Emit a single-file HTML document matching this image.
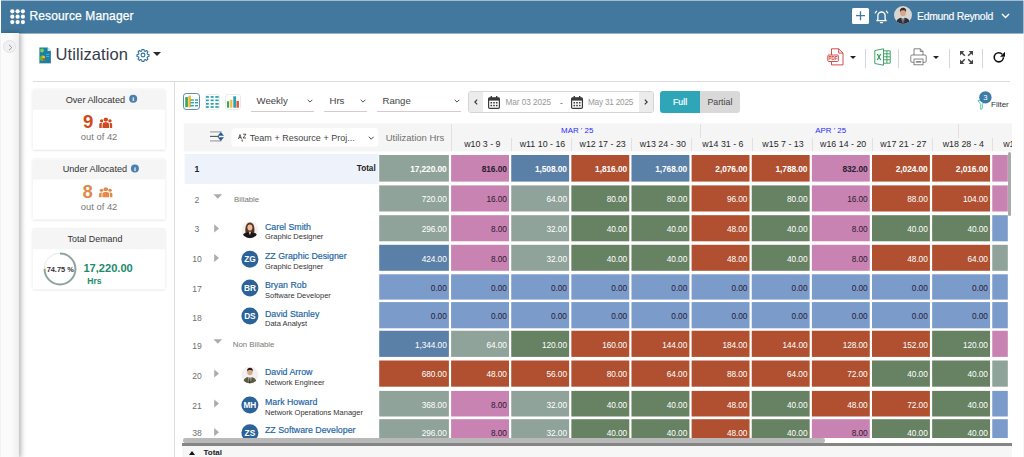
<!DOCTYPE html>
<html><head><meta charset="utf-8"><title>Resource Manager - Utilization</title>
<style>
*{box-sizing:border-box;margin:0;padding:0}
html,body{width:1024px;height:457px;overflow:hidden;background:#fff}
body{position:relative;font-family:"Liberation Sans",sans-serif;color:#333}
.abs,.c,.wk,.vs,.rn,.ar,.av,.nm,.sb,.cd,.gp,.tot{position:absolute}
#top{left:1px;top:0;width:1023px;height:33px;background:#42789d;border-top:1px solid #a3bdcf}
#top .title{position:absolute;left:28.5px;top:8.3px;font-size:12px;line-height:14px;color:#fff;letter-spacing:.13px;-webkit-text-stroke:.25px #fff}
#side{left:1px;top:33px;width:18px;height:425px;background:linear-gradient(to right,#fbfbfb 55%,#efefef);box-shadow:2px 0 5px rgba(0,0,0,.3)}
#side .btn{position:absolute;left:2.2px;top:7.4px;width:13px;height:13px;border-radius:50%;background:#f1f1f1;border:.6px solid #e2e2e2}
.hl{left:33px;top:81px;width:976.600px;height:1px;background:#dcdcdc}
.vl{left:174px;top:81px;width:1px;height:376px;background:#dcdcdc}
h1{position:absolute;left:55.5px;top:44px;font-size:16.5px;line-height:20px;font-weight:400;color:#343c4a;letter-spacing:.1px}
.ct{position:absolute;font-size:9.15px;line-height:12px;color:#333;white-space:nowrap}
.big{position:absolute;font-weight:700;font-size:18.6px;line-height:22px}
.out{position:absolute;left:80.6px;width:37px;text-align:center;font-size:9.4px;color:#777;line-height:13px;white-space:nowrap}
.sel{position:absolute;top:91px;height:20.5px;border-bottom:1px solid #d9c9cc;font-size:9.6px;line-height:20px;color:#444;padding-left:6px}
.sel svg{position:absolute;right:.8px;top:8.2px}
.tb{position:absolute}
.tsep{position:absolute;top:48.500px;width:1px;height:19px;background:#d4d4da}
#ghead{left:183.5px;top:123.5px;width:828.5px;height:28.2px;background:#f4f4f4}
.wk{top:138px;width:60.13px;text-align:center;font-size:8.85px;line-height:12px;color:#2a2a2a;white-space:nowrap;overflow:hidden}
.vs{width:1px;background:#e6dfdf}
.mo{position:absolute;top:125px;font-size:7.9px;line-height:11px;color:#2a2aff;text-align:center;letter-spacing:0;padding-left:3.4px}
.c{color:#fff;font-size:8.3px;letter-spacing:-.08px;text-align:right;padding-right:2.2px;white-space:nowrap}
.c.b{font-weight:700;font-size:8.4px}
.c.d{color:#2a2030}
.rn{left:187px;width:20px;text-align:center;font-size:8.6px;line-height:12px;color:#707070}
.rn.b{font-weight:700}
.ar{left:214.4px;width:0;height:0;border-left:4.6px solid #b0b0b0;border-top:3.7px solid transparent;border-bottom:3.7px solid transparent;margin-top:-.3px}
.cd{left:213.8px;width:0;height:0;border-top:4px solid #b3b3b3;border-left:4px solid transparent;border-right:4px solid transparent}
.av{left:241.4px;width:17px;height:17px;border-radius:50%}
.av.in{background:#2b6399;color:#fff;font-weight:700;font-size:8.3px;line-height:17px;text-align:center;letter-spacing:-.1px}
.nm{left:265px;font-size:8.8px;line-height:12px;color:#2265a4;-webkit-text-stroke:.18px #2265a4;white-space:nowrap}
.sb{left:265px;font-size:7.5px;line-height:10px;color:#333;white-space:nowrap}
.gp{font-size:7.8px;line-height:11px;color:#777}
.tot{left:330px;width:45.700px;top:163px;text-align:right;font-weight:700;font-size:8.2px;line-height:12px;color:#222}
</style></head><body>

<!-- top bar -->
<div id="top" class="abs">
 <svg style="position:absolute;left:9px;top:7.600px" width="16" height="16" viewBox="0 0 16 16" fill="#fff"><circle cx="2.300" cy="2.300" r="2.100"/><circle cx="7.600" cy="2.300" r="2.100"/><circle cx="12.900" cy="2.300" r="2.100"/><circle cx="2.300" cy="7.700" r="2.100"/><circle cx="7.600" cy="7.700" r="2.100"/><circle cx="12.900" cy="7.700" r="2.100"/><circle cx="2.300" cy="13.100" r="2.100"/><circle cx="7.600" cy="13.100" r="2.100"/><circle cx="12.900" cy="13.100" r="2.100"/></svg>
 <div class="title">Resource Manager</div>
 <div style="position:absolute;left:851.300px;top:7px;width:17px;height:15.500px;background:#fff;border-radius:1.500px"></div>
 <svg style="position:absolute;left:851.300px;top:7px" width="17" height="15.500" viewBox="0 0 17 15.500"><path d="M8.500 3.200v9M4 7.700h9" stroke="#42789d" stroke-width="1.300" fill="none"/></svg>
 <svg style="position:absolute;left:872.500px;top:6.500px" width="15" height="17" viewBox="0 0 15 17" fill="none" stroke="#fff" stroke-width="1.300" stroke-linecap="round"><path d="M3.900 11.500V7.600a3.600 3.600 0 017.200 0v3.900l1.100 1.100H2.800z" stroke-linejoin="round"/><path d="M6.500 14.600h2"/><path d="M2.600 3.200L1.300 4.900M12.400 3.200l1.300 1.700"/></svg>
 <svg style="position:absolute;left:892.700px;top:5.200px" width="18" height="18" viewBox="0 0 17 17"><defs><clipPath id="ce"><circle cx="8.500" cy="8.500" r="8.500"/></clipPath></defs><g clip-path="url(#ce)"><rect width="17" height="17" fill="#d9d6d2"/><ellipse cx="8.500" cy="6.200" rx="2.800" ry="3.400" fill="#d8a68a"/><path d="M5.600 5.600C5.300 2.700 7 1.700 8.600 1.700s3.300 1 2.800 3.900c-.6-1.200-1.500-1.600-2.800-1.600s-2.300.4-3 1.600z" fill="#3a2a22"/><path d="M1.800 17c0-4.300 2.600-6 6.700-6s6.700 1.700 6.700 6z" fill="#2b2f3a"/><path d="M7.200 10.700h2.600l-.5 6.300H7.700z" fill="#f4f4f4"/><path d="M8.100 11.500h.8l.4 5.500H7.700z" fill="#1c1c22"/></g></svg>
 <div style="position:absolute;left:916px;top:9px;font-size:10.400px;line-height:14px;color:#fff;white-space:nowrap;letter-spacing:-.27px;-webkit-text-stroke:.15px #fff">Edmund Reynold</div>
 <svg style="position:absolute;left:1000px;top:12px" width="9" height="6" viewBox="0 0 9 6" fill="none" stroke="#fff" stroke-width="1.400"><path d="M1 1l3.500 3.500L8 1"/></svg>
</div>

<div class="abs" style="left:1px;top:33px;width:1023px;height:1px;background:#42789d;opacity:.55"></div>
<div class="abs" style="left:1023px;top:0;width:1px;height:34px;background:#fff;opacity:.5;z-index:5"></div><div class="abs" style="left:1023px;top:34px;width:1px;height:423px;background:#f5f5f5"></div>
<!-- sidebar -->
<div id="side" class="abs"><div class="btn"></div>
 <svg style="position:absolute;left:6.700px;top:10.600px" width="5" height="7" viewBox="0 0 5 7" fill="none" stroke="#8f9bb0" stroke-width="1"><path d="M1 .8l2.800 2.700L1 6.200"/></svg>
</div>

<!-- title row -->
<svg class="abs" style="left:38.300px;top:47px" width="14.200" height="17" viewBox="0 0 14 17"><path d="M1.300.6h8.200l3.300 3.300v12.300H1.300z" fill="#1b7fa6"/><path d="M9.500.6v3.300h3.300z" fill="#d9e4ea"/><circle cx="3.900" cy="3.500" r="1.900" fill="#7fd04c"/><circle cx="4.300" cy="11.300" r="2.700" fill="#59b53c"/><path d="M4.300 11.300V8.600a2.700 2.700 0 012.700 2.700z" fill="#f2c53a"/><path d="M4.300 11.300H7a2.700 2.700 0 01-1.400 2.400z" fill="#d9432f"/><rect x="8" y="7" width="3" height=".8" fill="#5fb7d6"/><rect x="8" y="9" width="3" height=".8" fill="#5fb7d6"/><rect x="1" y="16" width="12" height=".8" fill="#c9c9c9"/></svg>
<h1>Utilization</h1>
<svg class="abs" style="left:135.800px;top:47.700px" width="14" height="14" viewBox="0 0 24 24" fill="none" stroke="#2f6fa3" stroke-width="1.900" stroke-linejoin="round"><circle cx="12" cy="12" r="3.300"/><path d="M10.300 2.500h3.400l.5 2.600 1.700.7 2.200-1.500 2.400 2.400-1.500 2.200.7 1.700 2.600.5v3.400l-2.600.5-.7 1.700 1.500 2.200-2.400 2.400-2.200-1.500-1.700.7-.5 2.600h-3.400l-.5-2.600-1.700-.7-2.200 1.500-2.400-2.400 1.500-2.200-.7-1.700-2.600-.5v-3.400l2.600-.5.7-1.700-1.500-2.200 2.400-2.400 2.200 1.500 1.700-.7z"/></svg>
<div class="abs" style="left:153.400px;top:52.300px;width:0;height:0;border-top:4.200px solid #2b2b2b;border-left:4.100px solid transparent;border-right:4.100px solid transparent"></div>

<!-- top-right toolbar -->
<svg class="tb" style="left:827px;top:47.500px" width="17" height="18" viewBox="0 0 17 18" fill="none" stroke="#cf3a36" stroke-width=".9"><path d="M4.500.8h7.200l4.300 4.300v11.800H4.500v-3.400M4.500 7V.8M11.700.8v4.300H16"/><rect x=".8" y="7" width="10.500" height="6.500" rx=".8" fill="#fff"/><text x="6" y="12" font-family="Liberation Sans,sans-serif" font-size="4.600" font-weight="700" fill="#cf3a36" stroke="none" text-anchor="middle">PDF</text></svg>
<div class="abs" style="left:850px;top:56.400px;width:0;height:0;border-top:3.600px solid #222;border-left:3.600px solid transparent;border-right:3.600px solid transparent"></div>
<div class="tsep" style="left:865px"></div>
<svg class="tb" style="left:873.800px;top:47.500px" width="17" height="18" viewBox="0 0 17 18" fill="none" stroke="#2f9a57" stroke-width=".9"><path d="M9.500 2.800h6.700v12.400H9.500"/><path d="M9.500 5.800h6.700M9.500 8.800h6.700M9.500 11.800h6.700M12.900 2.800v12.400"/><path d="M.8 2.500L9.500.8v16.400L.8 15.500z" fill="#fff"/><path d="M3.300 6l3.400 6M6.700 6l-3.400 6" stroke-width="1.200"/></svg>
<div class="tsep" style="left:898px"></div>
<svg class="tb" style="left:909.500px;top:47.500px" width="17" height="18" viewBox="0 0 17 18" fill="none" stroke="#666" stroke-width=".8"><path d="M4 7V.8h6.300l2.700 2.700V7"/><path d="M10.300.8v2.700H13"/><rect x=".8" y="7" width="15.400" height="7.300" rx="1.200"/><rect x="4" y="11" width="9" height="5.800" fill="#fff"/><path d="M5.800 13.900h5.400" stroke-width="1.300"/></svg>
<div class="abs" style="left:932.600px;top:56.400px;width:0;height:0;border-top:3.600px solid #222;border-left:3.600px solid transparent;border-right:3.600px solid transparent"></div>
<div class="tsep" style="left:949px"></div>
<svg class="tb" style="left:960px;top:50.600px" width="13" height="13" viewBox="0 0 13 13" fill="#444" stroke="#444"><path d="M0 0h4.400L0 4.400zM13 0H8.600L13 4.400zM0 13h4.400L0 8.600zM13 13H8.600L13 8.600z" stroke="none"/><path d="M1.500 1.500l3.300 3.300M11.500 1.500L8.200 4.800M1.500 11.500l3.300-3.300M11.500 11.500L8.200 8.200" stroke-width="1.500" fill="none"/></svg>
<div class="tsep" style="left:982px"></div>
<svg class="tb" style="left:992.600px;top:51px" width="13" height="13" viewBox="0 0 13 13" fill="none" stroke="#111" stroke-width="1.600"><path d="M10.400 6.300A4.600 4.600 0 115.800 1.700c1.300 0 2.500.5 3.300 1.400"/><path d="M12 .7v5H7z" fill="#111" stroke="none"/></svg>

<div class="hl abs"></div><div class="vl abs"></div>

<!-- cards -->
<svg class="abs" style="left:0;top:0" width="200" height="320" viewBox="0 0 200 320">
<defs><filter id="cs" x="-10%" y="-10%" width="120%" height="130%"><feDropShadow dx="0" dy=".4" stdDeviation="1.300" flood-color="#000" flood-opacity=".2"/></filter></defs>
<g filter="url(#cs)"><rect x="32.900" y="89.600" width="132.200" height="59.900" fill="#fff"/><rect x="32.900" y="159.400" width="132.200" height="59.900" fill="#fff"/><rect x="32.900" y="229.100" width="132.200" height="60" fill="#fff"/></g>
<rect x="32.900" y="89.600" width="132.200" height="20.100" fill="#f5f5f5"/><rect x="32.900" y="159.400" width="132.200" height="20.100" fill="#f5f5f5"/><rect x="32.900" y="229.100" width="132.200" height="20.100" fill="#f5f5f5"/>
<circle cx="133.200" cy="98.800" r="4" fill="#4a7fae"/><circle cx="134.900" cy="168.500" r="4" fill="#4a7fae"/>
<text x="133.200" y="101" font-family="Liberation Serif,serif" font-size="6.500" font-weight="700" fill="#fff" text-anchor="middle">i</text><text x="134.900" y="171" font-family="Liberation Serif,serif" font-size="6.500" font-weight="700" fill="#fff" text-anchor="middle">i</text>
<svg x="99" y="117.300" width="13.600" height="10.600" viewBox="0 0 14 12" preserveAspectRatio="none" fill="#cf4a1e"><circle cx="7" cy="2.600" r="2.300"/><circle cx="2.700" cy="3.800" r="1.700"/><circle cx="11.300" cy="3.800" r="1.700"/><path d="M3.600 12V8.300A2.600 2.600 0 016.200 5.700h1.600a2.600 2.600 0 012.600 2.600V12z"/><path d="M.3 12V8.200c0-1.200.9-2 2-2h1.200c-.5.600-.7 1.300-.7 2.100V12zM13.700 12V8.200c0-1.200-.9-2-2-2h-1.200c.5.600.7 1.300.7 2.100V12z"/></svg>
<svg x="98.800" y="186.900" width="14" height="10.700" viewBox="0 0 14 12" preserveAspectRatio="none" fill="#e08a4c"><circle cx="7" cy="2.600" r="2.300"/><circle cx="2.700" cy="3.800" r="1.700"/><circle cx="11.300" cy="3.800" r="1.700"/><path d="M3.600 12V8.300A2.600 2.600 0 016.200 5.700h1.600a2.600 2.600 0 012.600 2.600V12z"/><path d="M.3 12V8.200c0-1.200.9-2 2-2h1.200c-.5.600-.7 1.300-.7 2.100V12zM13.700 12V8.200c0-1.200-.9-2-2-2h-1.200c.5.600.7 1.300.7 2.100V12z"/></svg>
<circle cx="60" cy="269" r="15.900" fill="none" stroke="#e2e2e2" stroke-width=".9"/><circle cx="60" cy="269" r="15.400" fill="none" stroke="#8fa59b" stroke-width="2" stroke-dasharray="72.300 97" transform="rotate(-90 60 269)"/>
<text x="60.200" y="272" font-family="Liberation Sans,sans-serif" font-size="7.400" font-weight="700" fill="#333" text-anchor="middle">74.75 %</text>
</svg>
<div class="ct" style="left:65.700px;top:94px">Over Allocated</div>
<div class="ct" style="left:62.700px;top:163px">Under Allocated</div>
<div class="ct" style="left:67.600px;top:233px;font-size:8.900px">Total Demand</div>
<div class="big" style="left:83px;top:111px;color:#cf4a1e">9</div>
<div class="big" style="left:82.600px;top:181px;color:#e08a4c">8</div>
<div class="out" style="top:130px">out of 42</div>
<div class="out" style="top:200px">out of 42</div>
<div class="abs" style="left:83.400px;top:261px;font-size:11.100px;line-height:14px;font-weight:700;color:#1c8a6c;white-space:nowrap">17,220.00</div>
<div class="abs" style="left:87.300px;top:275px;font-size:8.600px;line-height:12px;font-weight:700;color:#1c8a6c">Hrs</div>

<!-- view toolbar -->
<div class="abs" style="left:182.900px;top:93px;width:17.100px;height:16.800px;border:1.100px solid #5c8ab2;border-radius:3.200px;background:#fff"></div>
<svg class="abs" style="left:185px;top:95px" width="14" height="13" viewBox="0 0 14 13"><rect x=".2" y="2.100" width="2.700" height="10.100" fill="#3fa75a"/><rect x="3.300" y=".6" width="2.700" height="11.800" rx=".8" fill="#f0bb3a"/><g fill="#27a0b2"><rect x="5.600" y="4.300" width="3.300" height="1.400"/><rect x="10" y="4.300" width="3" height="1.400"/><rect x="5.600" y="7" width="3.300" height="1.400"/><rect x="10" y="7" width="3" height="1.400"/><rect x="5.600" y="10" width="3.300" height="1.400"/><rect x="10" y="10" width="3" height="1.400"/></g></svg>
<div class="abs" style="left:204.700px;top:94px;width:15.400px;height:15.600px;border:1px solid #ebebeb;border-radius:3px;background:#fff"></div>
<svg class="abs" style="left:206.200px;top:96px" width="13" height="12" viewBox="0 0 13 12" fill="#27a0b2"><g id="gr"><rect x="0" y=".1" width="2.900" height="1.700"/><rect x="4.600" y=".1" width="3.100" height="1.700"/><rect x="9.300" y=".1" width="3.400" height="1.700"/></g><use href="#gr" y="3.400"/><use href="#gr" y="6.900"/><use href="#gr" y="10.100"/></svg>
<div class="abs" style="left:225.200px;top:94px;width:15.500px;height:15.600px;border:1px solid #ebebeb;border-radius:3px;background:#fff"></div>
<svg class="abs" style="left:226.900px;top:96px" width="12" height="12" viewBox="0 0 12 12"><rect x="0" y="5.200" width="2.200" height="6.500" fill="#3fa75a"/><rect x="3.200" y="3.700" width="2.200" height="8" fill="#f0bb3a"/><rect x="6.300" y=".3" width="2.800" height="11.400" fill="#27a0b2"/><rect x="9.500" y="5" width="2.400" height="6.700" fill="#e0523c"/></svg>

<div class="sel" style="left:250.500px;width:63.500px">Weekly<svg width="6" height="4.500" viewBox="0 0 7 5" fill="none" stroke="#333" stroke-width="1"><path d="M.8.800l2.700 2.700L6.200.8"/></svg></div>
<div class="sel" style="left:323.500px;width:43.500px">Hrs<svg width="6" height="4.500" viewBox="0 0 7 5" fill="none" stroke="#333" stroke-width="1"><path d="M.8.800l2.700 2.700L6.200.8"/></svg></div>
<div class="sel" style="left:376.500px;width:84.500px">Range<svg width="6" height="4.500" viewBox="0 0 7 5" fill="none" stroke="#333" stroke-width="1"><path d="M.8.800l2.700 2.700L6.200.8"/></svg></div>

<!-- date range -->
<div class="abs" style="left:467.500px;top:91.300px;width:186.500px;height:21.400px;border:1px solid #d4d4d4;border-radius:3px;background:#fff;overflow:hidden">
 <div style="position:absolute;left:0;top:0;width:14.500px;height:100%;background:#ececec"></div>
 <div style="position:absolute;right:0;top:0;width:14.500px;height:100%;background:#ececec"></div>
 <svg style="position:absolute;left:5px;top:6.500px" width="4" height="6" viewBox="0 0 4 6" fill="none" stroke="#333" stroke-width="1.100"><path d="M3.200.6L.8 3l2.400 2.400"/></svg>
 <svg style="position:absolute;right:5px;top:6.500px" width="4" height="6" viewBox="0 0 4 6" fill="none" stroke="#333" stroke-width="1.100"><path d="M.8.600L3.200 3 .8 5.400"/></svg>
 <svg style="position:absolute;left:19.500px;top:3.500px" width="12" height="13" viewBox="0 0 12 13"><rect x=".6" y="1.800" width="10.800" height="10.600" rx="1.200" fill="none" stroke="#3a3a3a" stroke-width="1.200"/><rect x=".6" y="1.800" width="10.800" height="2.800" fill="#3a3a3a"/><rect x="2.600" y="0" width="1.400" height="2.600" fill="#3a3a3a"/><rect x="8" y="0" width="1.400" height="2.600" fill="#3a3a3a"/><g fill="#3a3a3a"><rect x="2.500" y="6" width="1.600" height="1.500"/><rect x="5.200" y="6" width="1.600" height="1.500"/><rect x="7.900" y="6" width="1.600" height="1.500"/><rect x="2.500" y="8.800" width="1.600" height="1.500"/><rect x="5.200" y="8.800" width="1.600" height="1.500"/><rect x="7.900" y="8.800" width="1.600" height="1.500"/></g></svg>
 <div style="position:absolute;left:37px;top:5px;font-size:8.200px;line-height:12px;color:#999;white-space:nowrap;letter-spacing:-.05px">Mar 03 2025</div>
 <div style="position:absolute;left:91.500px;top:5px;font-size:8.400px;line-height:12px;color:#666">-</div>
 <svg style="position:absolute;left:102px;top:3.500px" width="12" height="13" viewBox="0 0 12 13"><rect x=".6" y="1.800" width="10.800" height="10.600" rx="1.200" fill="none" stroke="#3a3a3a" stroke-width="1.200"/><rect x=".6" y="1.800" width="10.800" height="2.800" fill="#3a3a3a"/><rect x="2.600" y="0" width="1.400" height="2.600" fill="#3a3a3a"/><rect x="8" y="0" width="1.400" height="2.600" fill="#3a3a3a"/><g fill="#3a3a3a"><rect x="2.500" y="6" width="1.600" height="1.500"/><rect x="5.200" y="6" width="1.600" height="1.500"/><rect x="7.900" y="6" width="1.600" height="1.500"/><rect x="2.500" y="8.800" width="1.600" height="1.500"/><rect x="5.200" y="8.800" width="1.600" height="1.500"/><rect x="7.900" y="8.800" width="1.600" height="1.500"/></g></svg>
 <div style="position:absolute;left:119.500px;top:5px;font-size:8.200px;line-height:12px;color:#999;white-space:nowrap;letter-spacing:-.2px">May 31 2025</div>
</div>
<div class="abs" style="left:660.300px;top:91.400px;width:39.500px;height:22px;background:#2fa6b7;border-radius:3px 0 0 3px;color:#fff;font-size:8.800px;line-height:22px;text-align:center;-webkit-text-stroke:.2px #fff">Full</div>
<div class="abs" style="left:699.800px;top:91.400px;width:40.200px;height:22px;background:#d9d9d9;border-radius:0 3px 3px 0;color:#444;font-size:8.800px;line-height:22px;text-align:center">Partial</div>

<!-- filter -->
<svg class="abs" style="left:976.800px;top:99.800px" width="9" height="10" viewBox="0 0 9 11" fill="none" stroke="#45b8ac" stroke-width=".9" stroke-linejoin="round"><path d="M.600.600h7.800L5.400 4.800v4.600L3.600 10.400V4.800z"/></svg>
<svg class="abs" style="left:975px;top:88px" width="20" height="20" viewBox="0 0 20 20"><circle cx="10.400" cy="9.400" r="6.200" fill="#3d7aa5"/><text x="10.400" y="12" font-family="Liberation Sans,sans-serif" font-size="7.800" fill="#fff" text-anchor="middle">3</text></svg>
<div class="abs" style="left:991px;top:98.500px;font-size:8px;line-height:11px;color:#333">Filter</div>

<!-- grid header -->
<svg class="abs" style="left:0;top:0" width="1024" height="200" viewBox="0 0 1024 200"><rect x="183.700" y="123.300" width="828.300" height="28.200" fill="#f5f5f5"/><rect x="184.600" y="153.900" width="194" height="30" fill="#eef3fb"/><rect x="231.500" y="128.100" width="146.800" height="18.400" rx="3" fill="#fff"/></svg>
<svg class="abs" style="left:210.200px;top:130.800px" width="15" height="11" viewBox="0 0 15 11"><path d="M0 .9h11.600M0 9.900h11.600" stroke="#a6a6a6" stroke-width="1.100" fill="none"/><path d="M0 5.400h9" stroke="#555" stroke-width="1.100" fill="none"/><path d="M10.800 1.100l3.200 3.700H7.600zM10.800 9.900l3.200-3.700H7.600z" fill="#2a5f96"/></svg>
<svg class="abs" style="left:237.500px;top:133px" width="9" height="9" viewBox="0 0 9 9" fill="none" stroke="#333" stroke-width=".8"><path d="M.5 6L2 1.500 3.500 6M1 4.600h2M5 1.200h3L5 5h3" /><path d="M4.200 8.300V6.200M3.400 7.500l.8.800.8-.8" stroke-width=".6"/></svg>
<div class="abs" style="left:249.800px;top:132px;font-size:9px;line-height:12px;color:#444;white-space:nowrap;letter-spacing:.02px">Team + Resource + Proj...</div>
<svg class="abs" style="left:367.800px;top:135.500px" width="6.500" height="4.600" viewBox="0 0 7 5" fill="none" stroke="#333" stroke-width="1"><path d="M.8.800l2.700 2.700L6.200.8"/></svg>
<div class="abs" style="left:379px;top:131.500px;width:72px;text-align:center;font-size:9.500px;line-height:12px;color:#707070;white-space:nowrap">Utilization Hrs</div>
<div class="vs" style="left:450.900px;top:124px;height:27px"></div>
<div class="vs" style="left:699.500px;top:124px;height:13.500px"></div>
<div class="vs" style="left:957.500px;top:124px;height:13.500px"></div>
<div class="mo" style="left:451px;width:249px">MAR ' 25</div>
<div class="mo" style="left:700px;width:258px">APR ' 25</div>
<div class="abs" style="left:0;top:0;width:1012px;height:457px;overflow:hidden;pointer-events:none">
<div class="wk" style="left:452.30px">w10 3 - 9</div>
<div class="vs" style="left:450.90px;top:138px;height:13px"></div>
<div class="wk" style="left:512.43px">w11 10 - 16</div>
<div class="vs" style="left:511.03px;top:138px;height:13px"></div>
<div class="wk" style="left:572.56px">w12 17 - 23</div>
<div class="vs" style="left:571.16px;top:138px;height:13px"></div>
<div class="wk" style="left:632.69px">w13 24 - 30</div>
<div class="vs" style="left:631.29px;top:138px;height:13px"></div>
<div class="wk" style="left:692.82px">w14 31 - 6</div>
<div class="vs" style="left:691.42px;top:138px;height:13px"></div>
<div class="wk" style="left:752.95px">w15 7 - 13</div>
<div class="vs" style="left:751.55px;top:138px;height:13px"></div>
<div class="wk" style="left:813.08px">w16 14 - 20</div>
<div class="vs" style="left:811.68px;top:138px;height:13px"></div>
<div class="wk" style="left:873.21px">w17 21 - 27</div>
<div class="vs" style="left:871.81px;top:138px;height:13px"></div>
<div class="wk" style="left:933.34px">w18 28 - 4</div>
<div class="vs" style="left:931.94px;top:138px;height:13px"></div>
<div class="wk" style="left:993.47px">w19 5 - 11</div>
<div class="vs" style="left:992.07px;top:138px;height:13px"></div>
</div>

<!-- total row bg -->


<!-- cells -->
<div class="abs" style="left:0;top:0;width:1012px;height:438.200px;overflow:hidden">
<div class="rn b" style="top:163px;line-height:12px;color:#222">1</div><div class="tot" style="top:163px;line-height:12px">Total</div><div class="rn" style="top:194px;line-height:12px">2</div><div class="gp" style="top:194px;line-height:11px;left:234px">Billable</div><div class="rn" style="top:223px;line-height:12px">3</div><div class="nm" style="top:221px;line-height:12px">Carel Smith</div><div class="sb" style="top:231px;line-height:11px">Graphic Designer</div><div class="rn" style="top:253px;line-height:12px">10</div><div class="nm" style="top:250px;line-height:12px">ZZ Graphic Designer</div><div class="sb" style="top:261px;line-height:11px">Graphic Designer</div><div class="rn" style="top:283px;line-height:12px">17</div><div class="nm" style="top:279px;line-height:12px">Bryan Rob</div><div class="sb" style="top:290px;line-height:11px">Software Developer</div><div class="rn" style="top:312px;line-height:12px">18</div><div class="nm" style="top:308px;line-height:12px">David Stanley</div><div class="sb" style="top:318px;line-height:11px">Data Analyst</div><div class="rn" style="top:340px;line-height:12px">19</div><div class="gp" style="top:339px;line-height:11px;left:232.8px">Non Billable</div><div class="rn" style="top:370px;line-height:12px">20</div><div class="nm" style="top:366px;line-height:12px">David Arrow</div><div class="sb" style="top:377px;line-height:11px">Network Engineer</div><div class="rn" style="top:400px;line-height:12px">21</div><div class="nm" style="top:396px;line-height:12px">Mark Howard</div><div class="sb" style="top:407px;line-height:11px">Network Operations Manager</div><div class="rn" style="top:427px;line-height:12px">38</div><div class="nm" style="top:424px;line-height:12px">ZZ Software Developer</div><div class="sb" style="top:435px;line-height:11px">Software Developer</div>
<svg class="abs" style="left:0;top:0" width="1012" height="439" viewBox="0 0 1012 439"><rect x="379.20" y="155.00" width="69.70" height="26.60" fill="#90a39a"/><rect x="451.10" y="155.00" width="57.90" height="26.60" fill="#c983b2"/><rect x="511.23" y="155.00" width="57.90" height="26.60" fill="#5b80a8"/><rect x="571.36" y="155.00" width="57.90" height="26.60" fill="#b05030"/><rect x="631.49" y="155.00" width="57.90" height="26.60" fill="#5b80a8"/><rect x="691.62" y="155.00" width="57.90" height="26.60" fill="#b05030"/><rect x="751.75" y="155.00" width="57.90" height="26.60" fill="#b05030"/><rect x="811.88" y="155.00" width="57.90" height="26.60" fill="#c983b2"/><rect x="872.01" y="155.00" width="57.90" height="26.60" fill="#b05030"/><rect x="932.14" y="155.00" width="57.90" height="26.60" fill="#b05030"/><rect x="992.27" y="155.00" width="15.53" height="26.60" fill="#c983b2"/><rect x="379.20" y="185.40" width="69.70" height="26.10" fill="#90a39a"/><rect x="451.10" y="185.40" width="57.90" height="26.10" fill="#c983b2"/><rect x="511.23" y="185.40" width="57.90" height="26.10" fill="#90a39a"/><rect x="571.36" y="185.40" width="57.90" height="26.10" fill="#668263"/><rect x="631.49" y="185.40" width="57.90" height="26.10" fill="#668263"/><rect x="691.62" y="185.40" width="57.90" height="26.10" fill="#b05030"/><rect x="751.75" y="185.40" width="57.90" height="26.10" fill="#668263"/><rect x="811.88" y="185.40" width="57.90" height="26.10" fill="#c983b2"/><rect x="872.01" y="185.40" width="57.90" height="26.10" fill="#b05030"/><rect x="932.14" y="185.40" width="57.90" height="26.10" fill="#b05030"/><rect x="992.27" y="185.40" width="15.53" height="26.10" fill="#c983b2"/><rect x="379.20" y="215.20" width="69.70" height="26.10" fill="#90a39a"/><rect x="451.10" y="215.20" width="57.90" height="26.10" fill="#c983b2"/><rect x="511.23" y="215.20" width="57.90" height="26.10" fill="#90a39a"/><rect x="571.36" y="215.20" width="57.90" height="26.10" fill="#668263"/><rect x="631.49" y="215.20" width="57.90" height="26.10" fill="#668263"/><rect x="691.62" y="215.20" width="57.90" height="26.10" fill="#b05030"/><rect x="751.75" y="215.20" width="57.90" height="26.10" fill="#668263"/><rect x="811.88" y="215.20" width="57.90" height="26.10" fill="#c983b2"/><rect x="872.01" y="215.20" width="57.90" height="26.10" fill="#668263"/><rect x="932.14" y="215.20" width="57.90" height="26.10" fill="#668263"/><rect x="992.27" y="215.20" width="15.53" height="26.10" fill="#7b9bcb"/><rect x="379.20" y="244.80" width="69.70" height="26.00" fill="#5b80a8"/><rect x="451.10" y="244.80" width="57.90" height="26.00" fill="#c983b2"/><rect x="511.23" y="244.80" width="57.90" height="26.00" fill="#90a39a"/><rect x="571.36" y="244.80" width="57.90" height="26.00" fill="#668263"/><rect x="631.49" y="244.80" width="57.90" height="26.00" fill="#668263"/><rect x="691.62" y="244.80" width="57.90" height="26.00" fill="#b05030"/><rect x="751.75" y="244.80" width="57.90" height="26.00" fill="#668263"/><rect x="811.88" y="244.80" width="57.90" height="26.00" fill="#c983b2"/><rect x="872.01" y="244.80" width="57.90" height="26.00" fill="#b05030"/><rect x="932.14" y="244.80" width="57.90" height="26.00" fill="#b05030"/><rect x="992.27" y="244.80" width="15.53" height="26.00" fill="#90a39a"/><rect x="379.20" y="274.30" width="69.70" height="25.30" fill="#7b9bcb"/><rect x="451.10" y="274.30" width="57.90" height="25.30" fill="#7b9bcb"/><rect x="511.23" y="274.30" width="57.90" height="25.30" fill="#7b9bcb"/><rect x="571.36" y="274.30" width="57.90" height="25.30" fill="#7b9bcb"/><rect x="631.49" y="274.30" width="57.90" height="25.30" fill="#7b9bcb"/><rect x="691.62" y="274.30" width="57.90" height="25.30" fill="#7b9bcb"/><rect x="751.75" y="274.30" width="57.90" height="25.30" fill="#7b9bcb"/><rect x="811.88" y="274.30" width="57.90" height="25.30" fill="#7b9bcb"/><rect x="872.01" y="274.30" width="57.90" height="25.30" fill="#7b9bcb"/><rect x="932.14" y="274.30" width="57.90" height="25.30" fill="#7b9bcb"/><rect x="992.27" y="274.30" width="15.53" height="25.30" fill="#7b9bcb"/><rect x="379.20" y="302.10" width="69.70" height="26.20" fill="#7b9bcb"/><rect x="451.10" y="302.10" width="57.90" height="26.20" fill="#7b9bcb"/><rect x="511.23" y="302.10" width="57.90" height="26.20" fill="#7b9bcb"/><rect x="571.36" y="302.10" width="57.90" height="26.20" fill="#7b9bcb"/><rect x="631.49" y="302.10" width="57.90" height="26.20" fill="#7b9bcb"/><rect x="691.62" y="302.10" width="57.90" height="26.20" fill="#7b9bcb"/><rect x="751.75" y="302.10" width="57.90" height="26.20" fill="#7b9bcb"/><rect x="811.88" y="302.10" width="57.90" height="26.20" fill="#7b9bcb"/><rect x="872.01" y="302.10" width="57.90" height="26.20" fill="#7b9bcb"/><rect x="932.14" y="302.10" width="57.90" height="26.20" fill="#7b9bcb"/><rect x="992.27" y="302.10" width="15.53" height="26.20" fill="#7b9bcb"/><rect x="379.20" y="330.75" width="69.70" height="26.15" fill="#5b80a8"/><rect x="451.10" y="330.75" width="57.90" height="26.15" fill="#90a39a"/><rect x="511.23" y="330.75" width="57.90" height="26.15" fill="#668263"/><rect x="571.36" y="330.75" width="57.90" height="26.15" fill="#b05030"/><rect x="631.49" y="330.75" width="57.90" height="26.15" fill="#b05030"/><rect x="691.62" y="330.75" width="57.90" height="26.15" fill="#b05030"/><rect x="751.75" y="330.75" width="57.90" height="26.15" fill="#b05030"/><rect x="811.88" y="330.75" width="57.90" height="26.15" fill="#b05030"/><rect x="872.01" y="330.75" width="57.90" height="26.15" fill="#b05030"/><rect x="932.14" y="330.75" width="57.90" height="26.15" fill="#668263"/><rect x="992.27" y="330.75" width="15.53" height="26.15" fill="#c983b2"/><rect x="379.20" y="360.50" width="69.70" height="26.20" fill="#b05030"/><rect x="451.10" y="360.50" width="57.90" height="26.20" fill="#b05030"/><rect x="511.23" y="360.50" width="57.90" height="26.20" fill="#b05030"/><rect x="571.36" y="360.50" width="57.90" height="26.20" fill="#b05030"/><rect x="631.49" y="360.50" width="57.90" height="26.20" fill="#b05030"/><rect x="691.62" y="360.50" width="57.90" height="26.20" fill="#b05030"/><rect x="751.75" y="360.50" width="57.90" height="26.20" fill="#b05030"/><rect x="811.88" y="360.50" width="57.90" height="26.20" fill="#b05030"/><rect x="872.01" y="360.50" width="57.90" height="26.20" fill="#668263"/><rect x="932.14" y="360.50" width="57.90" height="26.20" fill="#668263"/><rect x="992.27" y="360.50" width="15.53" height="26.20" fill="#90a39a"/><rect x="379.20" y="390.90" width="69.70" height="25.60" fill="#90a39a"/><rect x="451.10" y="390.90" width="57.90" height="25.60" fill="#c983b2"/><rect x="511.23" y="390.90" width="57.90" height="25.60" fill="#90a39a"/><rect x="571.36" y="390.90" width="57.90" height="25.60" fill="#668263"/><rect x="631.49" y="390.90" width="57.90" height="25.60" fill="#668263"/><rect x="691.62" y="390.90" width="57.90" height="25.60" fill="#b05030"/><rect x="751.75" y="390.90" width="57.90" height="25.60" fill="#668263"/><rect x="811.88" y="390.90" width="57.90" height="25.60" fill="#b05030"/><rect x="872.01" y="390.90" width="57.90" height="25.60" fill="#b05030"/><rect x="932.14" y="390.90" width="57.90" height="25.60" fill="#668263"/><rect x="992.27" y="390.90" width="15.53" height="25.60" fill="#7b9bcb"/><rect x="379.20" y="419.20" width="69.70" height="19.00" fill="#90a39a"/><rect x="451.10" y="419.20" width="57.90" height="19.00" fill="#c983b2"/><rect x="511.23" y="419.20" width="57.90" height="19.00" fill="#90a39a"/><rect x="571.36" y="419.20" width="57.90" height="19.00" fill="#668263"/><rect x="631.49" y="419.20" width="57.90" height="19.00" fill="#668263"/><rect x="691.62" y="419.20" width="57.90" height="19.00" fill="#b05030"/><rect x="751.75" y="419.20" width="57.90" height="19.00" fill="#668263"/><rect x="811.88" y="419.20" width="57.90" height="19.00" fill="#c983b2"/><rect x="872.01" y="419.20" width="57.90" height="19.00" fill="#668263"/><rect x="932.14" y="419.20" width="57.90" height="19.00" fill="#668263"/><rect x="992.27" y="419.20" width="15.53" height="19.00" fill="#7b9bcb"/><path d="M214.2 224.30L219 228.40L214.2 232.50z" fill="#ababab"/><svg x="241.4" y="221.20" width="17" height="17" viewBox="0 0 17 17"><defs><clipPath id="cf"><circle cx="8.5" cy="8.5" r="8.5"/></clipPath></defs><g clip-path="url(#cf)"><rect width="17" height="17" fill="#f4f2f0"/><path d="M4.2 11.5C3.2 7 4.5 1.2 8.6 1.2c4 0 5 5.5 4.2 10.3z" fill="#5a3420"/><ellipse cx="8.5" cy="6.3" rx="2.5" ry="3.1" fill="#e9bf9f"/><path d="M.6 17c0-4.600 3.200-6.300 7.900-6.300s7.900 1.700 7.900 6.300z" fill="#16181d"/><path d="M7.2 10.5l1.3 3.6 1.3-3.6z" fill="#e9bf9f"/></g></svg><path d="M214.2 253.90L219 258.00L214.2 262.10z" fill="#ababab"/><circle cx="249.9" cy="259.30" r="8.5" fill="#2b6399"/><text x="249.9" y="262" font-family="Liberation Sans,sans-serif" font-size="8.3" font-weight="700" fill="#fff" text-anchor="middle">ZG</text><circle cx="249.9" cy="288.10" r="8.5" fill="#2b6399"/><text x="249.9" y="291" font-family="Liberation Sans,sans-serif" font-size="8.3" font-weight="700" fill="#fff" text-anchor="middle">BR</text><circle cx="249.9" cy="316.10" r="8.5" fill="#2b6399"/><text x="249.9" y="319" font-family="Liberation Sans,sans-serif" font-size="8.3" font-weight="700" fill="#fff" text-anchor="middle">DS</text><path d="M214.2 369.40L219 373.50L214.2 377.60z" fill="#ababab"/><svg x="241.4" y="366.40" width="17" height="17" viewBox="0 0 17 17"><defs><clipPath id="cm"><circle cx="8.5" cy="8.5" r="8.5"/></clipPath></defs><g clip-path="url(#cm)"><rect width="17" height="17" fill="#f1f0ee"/><ellipse cx="8.5" cy="5.6" rx="2.7" ry="3.3" fill="#d9a98a"/><path d="M5.7 5C5.5 2.4 7 1.3 8.6 1.3s3.2 1 2.8 3.8c-.6-1.2-1.5-1.6-2.8-1.6S6.4 3.800 5.700 5z" fill="#2a1d18"/><path d="M1.8 17c0-4.5 2.600-6.300 6.700-6.300s6.700 1.800 6.700 6.300z" fill="#5c5a3c"/><path d="M7 10.400h3l-.6 6.600H7.600z" fill="#f4f4f4"/><path d="M8 11.200h1l.4 5.800H7.600z" fill="#1d2230"/></g></svg><path d="M214.2 399.40L219 403.50L214.2 407.60z" fill="#ababab"/><circle cx="249.9" cy="404.90" r="8.5" fill="#2b6399"/><text x="249.9" y="408" font-family="Liberation Sans,sans-serif" font-size="8.3" font-weight="700" fill="#fff" text-anchor="middle">MH</text><path d="M214.2 428.10L219 432.20L214.2 436.30z" fill="#ababab"/><circle cx="249.9" cy="432.80" r="8.5" fill="#2b6399"/><text x="249.9" y="436" font-family="Liberation Sans,sans-serif" font-size="8.3" font-weight="700" fill="#fff" text-anchor="middle">ZS</text><path d="M213.5 194.2h8.6l-4.300 4.600z" fill="#ababab"/><path d="M213.5 339.2h8.6l-4.300 4.600z" fill="#ababab"/></svg>
<div class="c b" style="left:379.20px;top:163px;width:69.70px;height:12px;line-height:12px">17,220.00</div>
<div class="c b d" style="left:451.10px;top:163px;width:57.90px;height:12px;line-height:12px">816.00</div>
<div class="c b" style="left:511.23px;top:163px;width:57.90px;height:12px;line-height:12px">1,508.00</div>
<div class="c b" style="left:571.36px;top:163px;width:57.90px;height:12px;line-height:12px">1,816.00</div>
<div class="c b" style="left:631.49px;top:163px;width:57.90px;height:12px;line-height:12px">1,768.00</div>
<div class="c b" style="left:691.62px;top:163px;width:57.90px;height:12px;line-height:12px">2,076.00</div>
<div class="c b" style="left:751.75px;top:163px;width:57.90px;height:12px;line-height:12px">1,788.00</div>
<div class="c b d" style="left:811.88px;top:163px;width:57.90px;height:12px;line-height:12px">832.00</div>
<div class="c b" style="left:872.01px;top:163px;width:57.90px;height:12px;line-height:12px">2,024.00</div>
<div class="c b" style="left:932.14px;top:163px;width:57.90px;height:12px;line-height:12px">2,016.00</div>
<div class="c" style="left:379.20px;top:194px;width:69.70px;height:11px;line-height:11px">720.00</div>
<div class="c d" style="left:451.10px;top:194px;width:57.90px;height:11px;line-height:11px">16.00</div>
<div class="c" style="left:511.23px;top:194px;width:57.90px;height:11px;line-height:11px">64.00</div>
<div class="c" style="left:571.36px;top:194px;width:57.90px;height:11px;line-height:11px">80.00</div>
<div class="c" style="left:631.49px;top:194px;width:57.90px;height:11px;line-height:11px">80.00</div>
<div class="c" style="left:691.62px;top:194px;width:57.90px;height:11px;line-height:11px">96.00</div>
<div class="c" style="left:751.75px;top:194px;width:57.90px;height:11px;line-height:11px">80.00</div>
<div class="c d" style="left:811.88px;top:194px;width:57.90px;height:11px;line-height:11px">16.00</div>
<div class="c" style="left:872.01px;top:194px;width:57.90px;height:11px;line-height:11px">88.00</div>
<div class="c" style="left:932.14px;top:194px;width:57.90px;height:11px;line-height:11px">104.00</div>
<div class="c" style="left:379.20px;top:224px;width:69.70px;height:11px;line-height:11px">296.00</div>
<div class="c d" style="left:451.10px;top:224px;width:57.90px;height:11px;line-height:11px">8.00</div>
<div class="c" style="left:511.23px;top:224px;width:57.90px;height:11px;line-height:11px">32.00</div>
<div class="c" style="left:571.36px;top:224px;width:57.90px;height:11px;line-height:11px">40.00</div>
<div class="c" style="left:631.49px;top:224px;width:57.90px;height:11px;line-height:11px">40.00</div>
<div class="c" style="left:691.62px;top:224px;width:57.90px;height:11px;line-height:11px">48.00</div>
<div class="c" style="left:751.75px;top:224px;width:57.90px;height:11px;line-height:11px">40.00</div>
<div class="c d" style="left:811.88px;top:224px;width:57.90px;height:11px;line-height:11px">8.00</div>
<div class="c" style="left:872.01px;top:224px;width:57.90px;height:11px;line-height:11px">40.00</div>
<div class="c" style="left:932.14px;top:224px;width:57.90px;height:11px;line-height:11px">40.00</div>
<div class="c" style="left:379.20px;top:254px;width:69.70px;height:11px;line-height:11px">424.00</div>
<div class="c d" style="left:451.10px;top:254px;width:57.90px;height:11px;line-height:11px">8.00</div>
<div class="c" style="left:511.23px;top:254px;width:57.90px;height:11px;line-height:11px">32.00</div>
<div class="c" style="left:571.36px;top:254px;width:57.90px;height:11px;line-height:11px">40.00</div>
<div class="c" style="left:631.49px;top:254px;width:57.90px;height:11px;line-height:11px">40.00</div>
<div class="c" style="left:691.62px;top:254px;width:57.90px;height:11px;line-height:11px">48.00</div>
<div class="c" style="left:751.75px;top:254px;width:57.90px;height:11px;line-height:11px">40.00</div>
<div class="c d" style="left:811.88px;top:254px;width:57.90px;height:11px;line-height:11px">8.00</div>
<div class="c" style="left:872.01px;top:254px;width:57.90px;height:11px;line-height:11px">48.00</div>
<div class="c" style="left:932.14px;top:254px;width:57.90px;height:11px;line-height:11px">64.00</div>
<div class="c d" style="left:379.20px;top:283px;width:69.70px;height:11px;line-height:11px">0.00</div>
<div class="c d" style="left:451.10px;top:283px;width:57.90px;height:11px;line-height:11px">0.00</div>
<div class="c d" style="left:511.23px;top:283px;width:57.90px;height:11px;line-height:11px">0.00</div>
<div class="c d" style="left:571.36px;top:283px;width:57.90px;height:11px;line-height:11px">0.00</div>
<div class="c d" style="left:631.49px;top:283px;width:57.90px;height:11px;line-height:11px">0.00</div>
<div class="c d" style="left:691.62px;top:283px;width:57.90px;height:11px;line-height:11px">0.00</div>
<div class="c d" style="left:751.75px;top:283px;width:57.90px;height:11px;line-height:11px">0.00</div>
<div class="c d" style="left:811.88px;top:283px;width:57.90px;height:11px;line-height:11px">0.00</div>
<div class="c d" style="left:872.01px;top:283px;width:57.90px;height:11px;line-height:11px">0.00</div>
<div class="c d" style="left:932.14px;top:283px;width:57.90px;height:11px;line-height:11px">0.00</div>
<div class="c d" style="left:379.20px;top:311px;width:69.70px;height:11px;line-height:11px">0.00</div>
<div class="c d" style="left:451.10px;top:311px;width:57.90px;height:11px;line-height:11px">0.00</div>
<div class="c d" style="left:511.23px;top:311px;width:57.90px;height:11px;line-height:11px">0.00</div>
<div class="c d" style="left:571.36px;top:311px;width:57.90px;height:11px;line-height:11px">0.00</div>
<div class="c d" style="left:631.49px;top:311px;width:57.90px;height:11px;line-height:11px">0.00</div>
<div class="c d" style="left:691.62px;top:311px;width:57.90px;height:11px;line-height:11px">0.00</div>
<div class="c d" style="left:751.75px;top:311px;width:57.90px;height:11px;line-height:11px">0.00</div>
<div class="c d" style="left:811.88px;top:311px;width:57.90px;height:11px;line-height:11px">0.00</div>
<div class="c d" style="left:872.01px;top:311px;width:57.90px;height:11px;line-height:11px">0.00</div>
<div class="c d" style="left:932.14px;top:311px;width:57.90px;height:11px;line-height:11px">0.00</div>
<div class="c" style="left:379.20px;top:340px;width:69.70px;height:11px;line-height:11px">1,344.00</div>
<div class="c" style="left:451.10px;top:340px;width:57.90px;height:11px;line-height:11px">64.00</div>
<div class="c" style="left:511.23px;top:340px;width:57.90px;height:11px;line-height:11px">120.00</div>
<div class="c" style="left:571.36px;top:340px;width:57.90px;height:11px;line-height:11px">160.00</div>
<div class="c" style="left:631.49px;top:340px;width:57.90px;height:11px;line-height:11px">144.00</div>
<div class="c" style="left:691.62px;top:340px;width:57.90px;height:11px;line-height:11px">184.00</div>
<div class="c" style="left:751.75px;top:340px;width:57.90px;height:11px;line-height:11px">144.00</div>
<div class="c" style="left:811.88px;top:340px;width:57.90px;height:11px;line-height:11px">128.00</div>
<div class="c" style="left:872.01px;top:340px;width:57.90px;height:11px;line-height:11px">152.00</div>
<div class="c" style="left:932.14px;top:340px;width:57.90px;height:11px;line-height:11px">120.00</div>
<div class="c" style="left:379.20px;top:369px;width:69.70px;height:11px;line-height:11px">680.00</div>
<div class="c" style="left:451.10px;top:369px;width:57.90px;height:11px;line-height:11px">48.00</div>
<div class="c" style="left:511.23px;top:369px;width:57.90px;height:11px;line-height:11px">56.00</div>
<div class="c" style="left:571.36px;top:369px;width:57.90px;height:11px;line-height:11px">80.00</div>
<div class="c" style="left:631.49px;top:369px;width:57.90px;height:11px;line-height:11px">64.00</div>
<div class="c" style="left:691.62px;top:369px;width:57.90px;height:11px;line-height:11px">88.00</div>
<div class="c" style="left:751.75px;top:369px;width:57.90px;height:11px;line-height:11px">64.00</div>
<div class="c" style="left:811.88px;top:369px;width:57.90px;height:11px;line-height:11px">72.00</div>
<div class="c" style="left:872.01px;top:369px;width:57.90px;height:11px;line-height:11px">40.00</div>
<div class="c" style="left:932.14px;top:369px;width:57.90px;height:11px;line-height:11px">40.00</div>
<div class="c" style="left:379.20px;top:400px;width:69.70px;height:11px;line-height:11px">368.00</div>
<div class="c d" style="left:451.10px;top:400px;width:57.90px;height:11px;line-height:11px">8.00</div>
<div class="c" style="left:511.23px;top:400px;width:57.90px;height:11px;line-height:11px">32.00</div>
<div class="c" style="left:571.36px;top:400px;width:57.90px;height:11px;line-height:11px">40.00</div>
<div class="c" style="left:631.49px;top:400px;width:57.90px;height:11px;line-height:11px">40.00</div>
<div class="c" style="left:691.62px;top:400px;width:57.90px;height:11px;line-height:11px">48.00</div>
<div class="c" style="left:751.75px;top:400px;width:57.90px;height:11px;line-height:11px">40.00</div>
<div class="c" style="left:811.88px;top:400px;width:57.90px;height:11px;line-height:11px">48.00</div>
<div class="c" style="left:872.01px;top:400px;width:57.90px;height:11px;line-height:11px">72.00</div>
<div class="c" style="left:932.14px;top:400px;width:57.90px;height:11px;line-height:11px">40.00</div>
<div class="c" style="left:379.20px;top:428px;width:69.70px;height:11px;line-height:11px">296.00</div>
<div class="c d" style="left:451.10px;top:428px;width:57.90px;height:11px;line-height:11px">8.00</div>
<div class="c" style="left:511.23px;top:428px;width:57.90px;height:11px;line-height:11px">32.00</div>
<div class="c" style="left:571.36px;top:428px;width:57.90px;height:11px;line-height:11px">40.00</div>
<div class="c" style="left:631.49px;top:428px;width:57.90px;height:11px;line-height:11px">40.00</div>
<div class="c" style="left:691.62px;top:428px;width:57.90px;height:11px;line-height:11px">48.00</div>
<div class="c" style="left:751.75px;top:428px;width:57.90px;height:11px;line-height:11px">40.00</div>
<div class="c d" style="left:811.88px;top:428px;width:57.90px;height:11px;line-height:11px">8.00</div>
<div class="c" style="left:872.01px;top:428px;width:57.90px;height:11px;line-height:11px">40.00</div>
<div class="c" style="left:932.14px;top:428px;width:57.90px;height:11px;line-height:11px">40.00</div>
</div>

<!-- scrollbars -->
<div class="abs" style="left:1007.800px;top:151.700px;width:3.700px;height:64px;background:#a9a9a9;border-radius:2px"></div>
<div class="abs" style="left:183px;top:438.200px;width:642px;height:4.400px;background:#b9b9b9;border-radius:2.200px"></div>
<div class="abs" style="left:182px;top:442.800px;width:830px;height:3.600px;background:#858585"></div>
<div class="abs" style="left:182px;top:446.400px;width:830px;height:10.600px;background:#f6f6f6"></div>
<div class="abs" style="left:189px;top:450.500px;width:0;height:0;border-bottom:4.200px solid #111;border-left:3.300px solid transparent;border-right:3.300px solid transparent"></div>
<div class="abs" style="left:203.500px;top:447px;font-size:8px;line-height:11px;font-weight:700;color:#222">Total</div>

</body></html>
